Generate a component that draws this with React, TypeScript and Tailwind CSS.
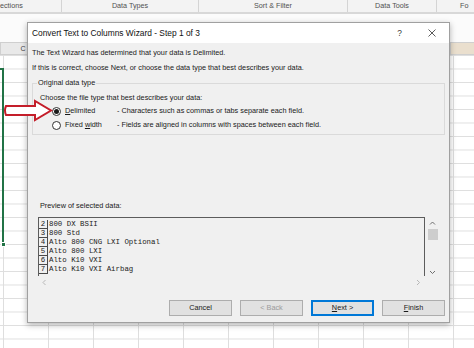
import React from "react";

const ribbon = [
  { label: "ections", w: "w-[62px]", align: "justify-start" },
  { label: "Data Types", w: "w-[137px]", align: "justify-center" },
  { label: "Sort & Filter", w: "w-[149px]", align: "justify-center" },
  { label: "Data Tools", w: "w-[89px]", align: "justify-center" },
];

const rows = [
  { n: 2, text: "800 DX BSII" },
  { n: 3, text: "800 Std" },
  { n: 4, text: "Alto 800 CNG LXI Optional" },
  { n: 5, text: "Alto 800 LXI" },
  { n: 6, text: "Alto K10 VXI" },
  { n: 7, text: "Alto K10 VXI Airbag" },
];

// only column C peeks out from under the dialog
const columns = ["C", "", "", "", "", "", "", "", "", "", ""];

function Ribbon() {
  return (
    <div className="flex h-[12px] bg-[#f3f3f3] text-[7.2px] leading-[12px] text-[#505050]">
      {ribbon.map((g) => (
        <div key={g.label} className={`flex ${g.w} ${g.align} border-r border-[#d4d4d4]`}>
          {g.label}
        </div>
      ))}
      <div className="pl-[23px]">Fo</div>
    </div>
  );
}

function Sheet() {
  return (
    <div className="flex h-[336px] flex-col">
      <div className="h-[2px] bg-[#d8d8d8]" />
      <div className="h-[28px] bg-[#fbfbfb]" />
      <div className="flex h-[13px] border-y border-[#cfcfcf] bg-[#e9e9e9] text-[7px] leading-[11px] text-[#444]">
        <div className="w-[3px]" />
        {columns.map((c, i) => (
          <div
            key={i}
            className={`w-[45px] shrink-0 border-l border-[#d0d0d0] text-center ${i === 10 ? "bg-[#eadfce]" : ""}`}
          >
            {c}
          </div>
        ))}
      </div>
      <div className="flex-1 bg-white bg-[linear-gradient(to_right,#dedede_1px,transparent_1px),linear-gradient(to_bottom,#dedede_1px,transparent_1px)] bg-[size:45px_13.5px] bg-[position:3px_0px]" />
    </div>
  );
}

function Radio({ checked }: { checked?: boolean }) {
  return (
    <span className="flex h-[9px] w-[9px] items-center justify-center rounded-full border border-[#333] bg-white">
      {checked && <span className="h-[5px] w-[5px] rounded-full bg-[#1a1a1a]" />}
    </span>
  );
}

function Button({ children, primary, disabled }: { children: React.ReactNode; primary?: boolean; disabled?: boolean }) {
  return (
    <div
      className={`flex h-[16px] w-[63px] items-center justify-center bg-[#e1e1e1] text-[7.3px] ${
        primary ? "border-2 border-[#0078d7]" : "border border-[#adadad]"
      } ${disabled ? "text-[#9c9c9c]" : "text-[#1a1a1a]"}`}
    >
      {children}
    </div>
  );
}

function Chevron({ dir }: { dir: "up" | "down" | "left" | "right" }) {
  const d = {
    up: "M1 4.5 L3.5 2 L6 4.5",
    down: "M1 2 L3.5 4.5 L6 2",
    left: "M4.5 1 L2 3.5 L4.5 6",
    right: "M2 1 L4.5 3.5 L2 6",
  }[dir];
  const light = dir === "left" || dir === "right";
  return (
    <svg width="7" height="7" viewBox="0 0 7 7">
      <path d={d} fill="none" stroke={light ? "#b0b0b0" : "#606060"} strokeWidth="0.9" />
    </svg>
  );
}

function Preview() {
  return (
    <div className="ml-[10px] mr-[9px] mt-[6px] grid grid-cols-[387px_15px] grid-rows-[59px_12px]">
      <div className="border-x border-t border-[#5c5c5c] bg-[#f0f0f0] pt-[2px] font-['Liberation_Mono',monospace] text-[7.4px] leading-[9px] text-[#222]">
        {rows.map((r) => (
          <div key={r.n} className="flex h-[9px]">
            <div className="w-[9px] border-b border-r border-[#4a4a4a] text-center">{r.n}</div>
            <div className="pl-[1px] whitespace-pre">{r.text}</div>
          </div>
        ))}
      </div>
      <div className="flex flex-col items-center pt-[3px]">
        <Chevron dir="up" />
        <div className="mt-[2px] h-[11px] w-[10px] bg-[#cdcdcd]" />
        <div className="flex-1" />
        <Chevron dir="down" />
      </div>
      <div className="flex items-center justify-between px-[3px]">
        <Chevron dir="left" />
        <Chevron dir="right" />
      </div>
      <div />
    </div>
  );
}

function Wizard() {
  return (
    <div className="absolute left-[27px] top-[22px] flex h-[301px] w-[423px] flex-col border border-[#a0a0a0] bg-[#f0f0f0] text-[7.3px] leading-[10px] text-[#1a1a1a] shadow-[0_2px_6px_rgba(0,0,0,0.3)]">
      <div className="flex h-[20px] items-center bg-white pl-[4px] text-[8.4px] text-[#111]">
        <span>Convert Text to Columns Wizard - Step 1 of 3</span>
        <span className="ml-auto mr-[26px] text-[8.4px] text-[#333]">?</span>
        <svg width="8" height="8" viewBox="0 0 8 8" className="mr-[13px]">
          <path d="M0.5 0.5 L7.5 7.5 M7.5 0.5 L0.5 7.5" stroke="#333" strokeWidth="0.8" />
        </svg>
      </div>
      <div className="flex flex-1 flex-col">
        <div className="mt-[5px] pl-[4px]">The Text Wizard has determined that your data is Delimited.</div>
        <div className="mt-[5px] pl-[4px]">
          If this is correct, choose Next, or choose the data type that best describes your data.
        </div>
        <fieldset className="mx-[4px] mt-[5px] border border-[#dadada] px-[7px] pb-[2px]">
          <legend className="ml-[-3px] px-[1px]">Original data type</legend>
          <div className="mt-[5px]">Choose the file type that best describes your data:</div>
          <div className="mt-[1px] flex h-[14px] items-center pl-[12px]">
            <Radio checked />
            <span className="ml-[4px] w-[52px]">
              <u>D</u>elimited
            </span>
            <span>- Characters such as commas or tabs separate each field.</span>
          </div>
          <div className="flex h-[14px] items-center pl-[12px]">
            <Radio />
            <span className="ml-[4px] w-[52px]">
              Fixed <u>w</u>idth
            </span>
            <span>- Fields are aligned in columns with spaces between each field.</span>
          </div>
        </fieldset>
        <div className="mt-[66px] pl-[12px]">Preview of selected data:</div>
        <Preview />
        <div className="mt-[12px] flex justify-end gap-[8px] pr-[4px]">
          <Button>Cancel</Button>
          <Button disabled>&lt; Back</Button>
          <Button primary>
            <span>
              <u>N</u>ext &gt;
            </span>
          </Button>
          <Button>
            <span>
              <u>F</u>inish
            </span>
          </Button>
        </div>
      </div>
    </div>
  );
}

function Selection() {
  return (
    <>
      <div className="absolute left-0 top-[68px] h-[177px] w-[4px] border-r-2 border-t-2 border-[#217346]" />
      <div className="absolute left-[1px] top-[242px] h-[5px] w-[5px] border border-white bg-[#217346]" />
    </>
  );
}

function RedArrow() {
  return (
    <svg className="absolute left-[3px] top-[99px]" width="52" height="24" viewBox="0 0 52 24">
      <path
        d="M3 7 L32 7 L32 2 L48 11.5 L32 21 L32 16 L3 16 Q1 11.5 3 7 Z"
        fill="white"
        stroke="#c41e2a"
        strokeWidth="2"
        strokeLinejoin="miter"
      />
    </svg>
  );
}

export default function App() {
  return (
    <div className="relative h-[348px] w-[474px] overflow-hidden bg-white font-['Liberation_Sans',Arial,sans-serif]">
      <Ribbon />
      <Sheet />
      <Selection />
      <Wizard />
      <RedArrow />
    </div>
  );
}
